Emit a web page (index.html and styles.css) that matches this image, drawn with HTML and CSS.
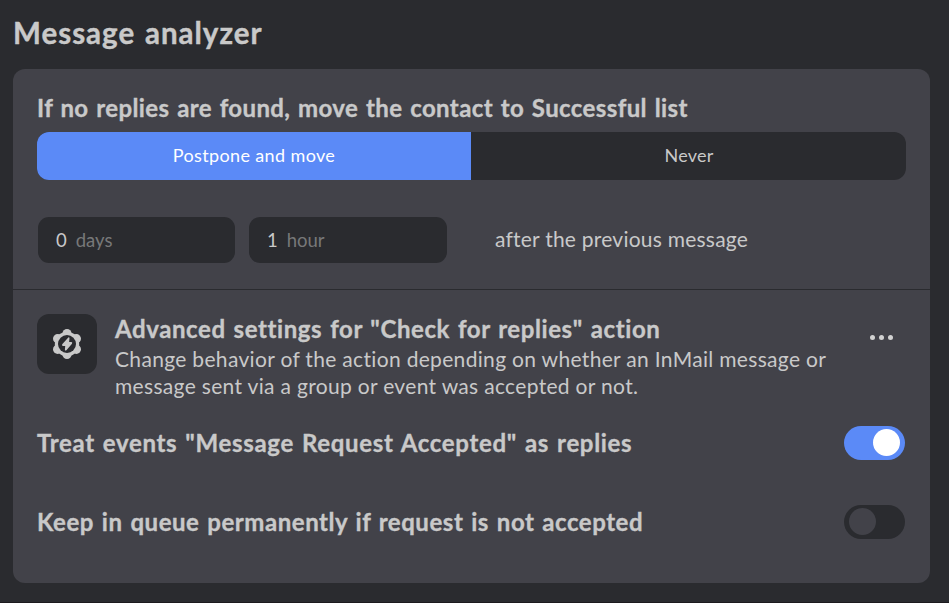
FILE: index.html
```html
<!DOCTYPE html>
<html lang="en">
<head>
<meta charset="utf-8">
<title>Message analyzer</title>
<link rel="stylesheet" href="styles.css">
</head>
<body>
<main class="page">
  <h1 class="title">Message analyzer</h1>
  <div class="card">
    <section class="timing">
      <h2 class="heading heading-replies">If no replies are found, move the contact to Successful list</h2>
      <div class="segmented">
        <button class="segment segment-active">Postpone and move</button>
        <button class="segment">Never</button>
      </div>
      <div class="delay">
        <div class="field"><span>0</span><span class="unit">days</span></div>
        <div class="field"><span>1</span><span class="unit">hour</span></div>
        <span class="after">after the previous message</span>
      </div>
    </section>
    <section class="advanced">
      <div class="intro">
        <div class="icon-box">
          <svg class="gear" viewBox="0 0 30 32">
            <g class="gear-body">
              <circle cx="15" cy="16" r="12.2"/>
              <circle cx="15" cy="5.4" r="4.5"/>
              <circle cx="24.3" cy="10.7" r="4.7"/>
              <circle cx="24.3" cy="21.3" r="4.7"/>
              <circle cx="15" cy="26.6" r="4.5"/>
              <circle cx="5.7" cy="21.3" r="4.7"/>
              <circle cx="5.7" cy="10.7" r="4.7"/>
            </g>
            <circle class="gear-hole" cx="15" cy="16" r="9"/>
            <path class="gear-body" d="M16.3 9.4L10.2 16.2Q9.5 17.7 11 17.9H13.2L12.9 22Q13.3 23 14.4 22.2L20 15.8Q20.7 14.2 19.4 14H17.1L17.5 9.9Q17.2 8.7 16.3 9.4Z"/>
          </svg>
        </div>
        <div class="intro-text">
          <h2 class="heading heading-advanced">Advanced settings for "Check for replies" action</h2>
          <p class="description"><span class="line-one">Change behavior of the action depending on whether an InMail message or</span><br><span class="line-two">message sent via a group or event was accepted or not.</span></p>
        </div>
        <button class="more" aria-label="More"><i class="dot"></i><i class="dot"></i><i class="dot"></i></button>
      </div>
      <div class="option">
        <h2 class="heading heading-treat">Treat events "Message Request Accepted" as replies</h2>
        <span class="toggle toggle-on"><i class="knob"></i></span>
      </div>
      <div class="option">
        <h2 class="heading heading-keep">Keep in queue permanently if request is not accepted</h2>
        <span class="toggle"><i class="knob"></i></span>
      </div>
    </section>
  </div>
</main>
</body>
</html>
```
FILE: styles.css
```css
* { box-sizing: border-box; }
body {
  margin: 0;
  height: 603px;
  overflow: hidden;
  background: #2a2b2f;
  color: #c9c9c9;
  font-family: Lato, "Liberation Sans", sans-serif;
}
h1, h2, p { margin: 0; }
button { border: 0; padding: 0; font: inherit; color: inherit; background: none; }
.page { height: 603px; padding: 13px 19px 0 13px; border-bottom: 1px solid #1c1a1e; }
.title { height: 56px; line-height: 39px; font-size: 29.5px; font-weight: 700; letter-spacing: 1px; word-spacing: 1.6px; white-space: nowrap; -webkit-text-stroke: .4px #c9c9c9; }
.card { height: 514px; border-radius: 12px; background: #424249; }
.timing { height: 221px; padding: 23px 24px 0; border-bottom: 1px solid #2a2b2f; }
.heading { height: 32px; line-height: 31px; font-size: 24px; font-weight: 700; word-spacing: 1.5px; white-space: nowrap; -webkit-text-stroke: .35px #c9c9c9; }
.heading-replies { height: 40px; letter-spacing: .39px; }
.heading-advanced { letter-spacing: .59px; }
.heading-treat { letter-spacing: .68px; }
.heading-keep { letter-spacing: .54px; }
.segmented { display: flex; height: 48px; border-radius: 12px; overflow: hidden; background: #2a2b2f; }
.segment { flex: 1; padding-bottom: 2px; font-size: 18px; letter-spacing: .25px; }
.segment-active { background: #5b8af7; color: #fff; border-right: 1px solid #2a2b2f; background-clip: padding-box; letter-spacing: .37px; }
.delay { display: flex; align-items: center; margin: 37px 0 0 1px; }
.field { display: flex; gap: 9px; width: 197px; height: 46px; margin-right: 14px; padding-left: 18px; border-radius: 11px; background: #2a2b2f; font-size: 18.5px; line-height: 46px; }
.field + .field { width: 198px; margin-right: 48px; }
.unit { color: #777879; }
.after { padding-bottom: 3px; font-size: 21px; letter-spacing: .23px; white-space: nowrap; }
.advanced { padding: 24px 25px 0 24px; }
.intro { display: flex; height: 112px; }
.icon-box { display: flex; width: 60px; height: 60px; margin-right: 18px; border-radius: 12px; background: #2a2b2f; align-items: center; justify-content: center; }
.gear { width: 30px; height: 32px; }
.gear-body { fill: #c9c9c9; }
.gear-hole { fill: #2a2b2f; }
.intro-text { flex: 1; }
.intro-text .heading { margin-top: -1px; }
.description { margin-top: 0; font-size: 21px; line-height: 27px; letter-spacing: .32px; white-space: nowrap; }
.more { display: flex; gap: 4px; height: 5px; margin: 21px 12px 0 0; }
.dot { width: 5px; height: 5px; border-radius: 50%; background: #d2d2d2; }
.option { display: flex; align-items: center; justify-content: space-between; height: 34px; margin-bottom: 45px; }
.toggle { width: 61px; height: 34px; padding: 3px 5px; border-radius: 17px; background: #2a2b2f; }
.knob { display: block; width: 27px; height: 27px; border-radius: 50%; background: #424249; }
.toggle-on { background: #5b8af7; }
.toggle-on .knob { margin-left: 24px; background: #fff; }
```
